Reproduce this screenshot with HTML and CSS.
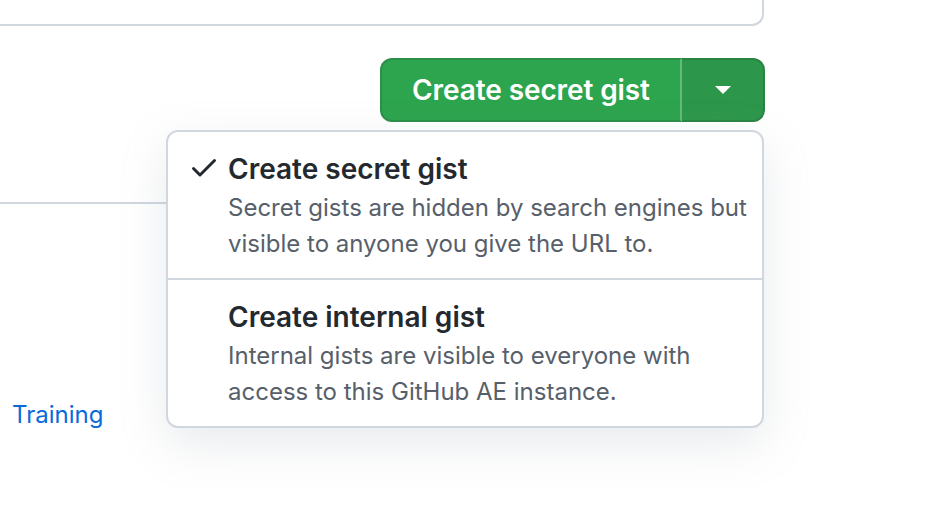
FILE: index.html
```html
<!DOCTYPE html>
<html>
<head>
<meta charset="utf-8">
<link rel="stylesheet" href="styles.css">
</head>
<body>
<div class="page">
  <div class="topbox"></div>
  <div class="actions">
    <div class="btn-group">
      <button class="btn-main">Create secret gist</button>
      <button class="btn-caret" aria-label="More options"><span class="caret"></span></button>
      <div class="menu">
        <div class="menu-item">
          <svg class="check" viewBox="0 0 16 16" width="32" height="32"><path fill="#24292f" d="M13.78 4.22a.75.75 0 0 1 0 1.06l-7.25 7.25a.75.75 0 0 1-1.06 0L2.22 9.28a.751.751 0 0 1 .018-1.042.751.751 0 0 1 1.042-.018L6 10.94l6.72-6.72a.75.75 0 0 1 1.06 0Z"/></svg>
          <div class="item-text">
            <div class="item-title">Create secret gist</div>
            <div class="item-desc">Secret gists are hidden by search engines but visible to anyone you give the URL to.</div>
          </div>
        </div>
        <div class="menu-item">
          <span class="check-space"></span>
          <div class="item-text">
            <div class="item-title">Create internal gist</div>
            <div class="item-desc">Internal gists are visible to everyone with access to this GitHub AE instance.</div>
          </div>
        </div>
      </div>
    </div>
  </div>
  <div class="footer">
    <a class="link" href="#">Training</a>
  </div>
</div>
</body>
</html>
```

FILE: styles.css
```css
html, body {
  margin: 0;
  padding: 0;
  background: #ffffff;
}
body {
  font-family: Inter, "Noto Sans", "Liberation Sans", sans-serif;
  color: #24292f;
  overflow: hidden;
}
.page {
  width: 928px;
  height: 508px;
  position: relative;
}
.topbox {
  width: 784px;
  margin-left: -20px;
  height: 26px;
  box-sizing: border-box;
  border-right: 2px solid #d0d7de;
  border-bottom: 2px solid #d0d7de;
  border-bottom-right-radius: 12px;
}
.actions {
  width: 765px;
  margin-top: 32px;
  display: flex;
  justify-content: flex-end;
}
.btn-group {
  position: relative;
  display: flex;
  height: 64px;
}
.btn-main, .btn-caret {
  font-family: inherit;
  border: 2px solid rgba(27, 31, 36, 0.15);
  color: #ffffff;
  margin: 0;
  cursor: pointer;
}
.btn-main {
  width: 302px;
  background: #2da44e;
  border-radius: 12px 0 0 12px;
  font-size: 28px;
  font-weight: 600;
  letter-spacing: -0.1px;
  padding: 0;
  border-right: 2px solid rgba(255, 255, 255, 0.25);
}
.btn-caret {
  width: 83px;
  background: #2c974b;
  border-left: 0;
  border-radius: 0 12px 12px 0;
  display: flex;
  align-items: center;
  justify-content: center;
  padding: 0;
}
.caret {
  width: 0;
  height: 0;
  border-left: 8px solid transparent;
  border-right: 8px solid transparent;
  border-top: 8px solid #ffffff;
}
.menu {
  position: absolute;
  top: calc(100% + 8px);
  right: 1px;
  width: 598px;
  box-sizing: border-box;
  background: #ffffff;
  border: 2px solid #d0d7de;
  border-radius: 12px;
  box-shadow: 0 16px 48px rgba(140, 149, 159, 0.2);
  z-index: 2;
}
.menu-item {
  display: flex;
  gap: 8px;
  padding: 16px 12px 16px 20px;
}
.menu-item + .menu-item {
  border-top: 2px solid #d0d7de;
}
.check, .check-space {
  flex: none;
  width: 32px;
  height: 32px;
  margin-top: 3px;
}
.item-title {
  font-size: 28px;
  font-weight: 600;
  line-height: 42px;
  color: #24292f;
}
.item-desc {
  font-size: 24px;
  line-height: 36px;
  color: #57606a;
}
.footer {
  margin-top: 80px;
  width: 764px;
  box-sizing: border-box;
  border-top: 2px solid #d0d7de;
  padding-top: 196px;
  padding-left: 12px;
}
.link {
  font-size: 24px;
  color: #0969da;
  text-decoration: none;
}
```
